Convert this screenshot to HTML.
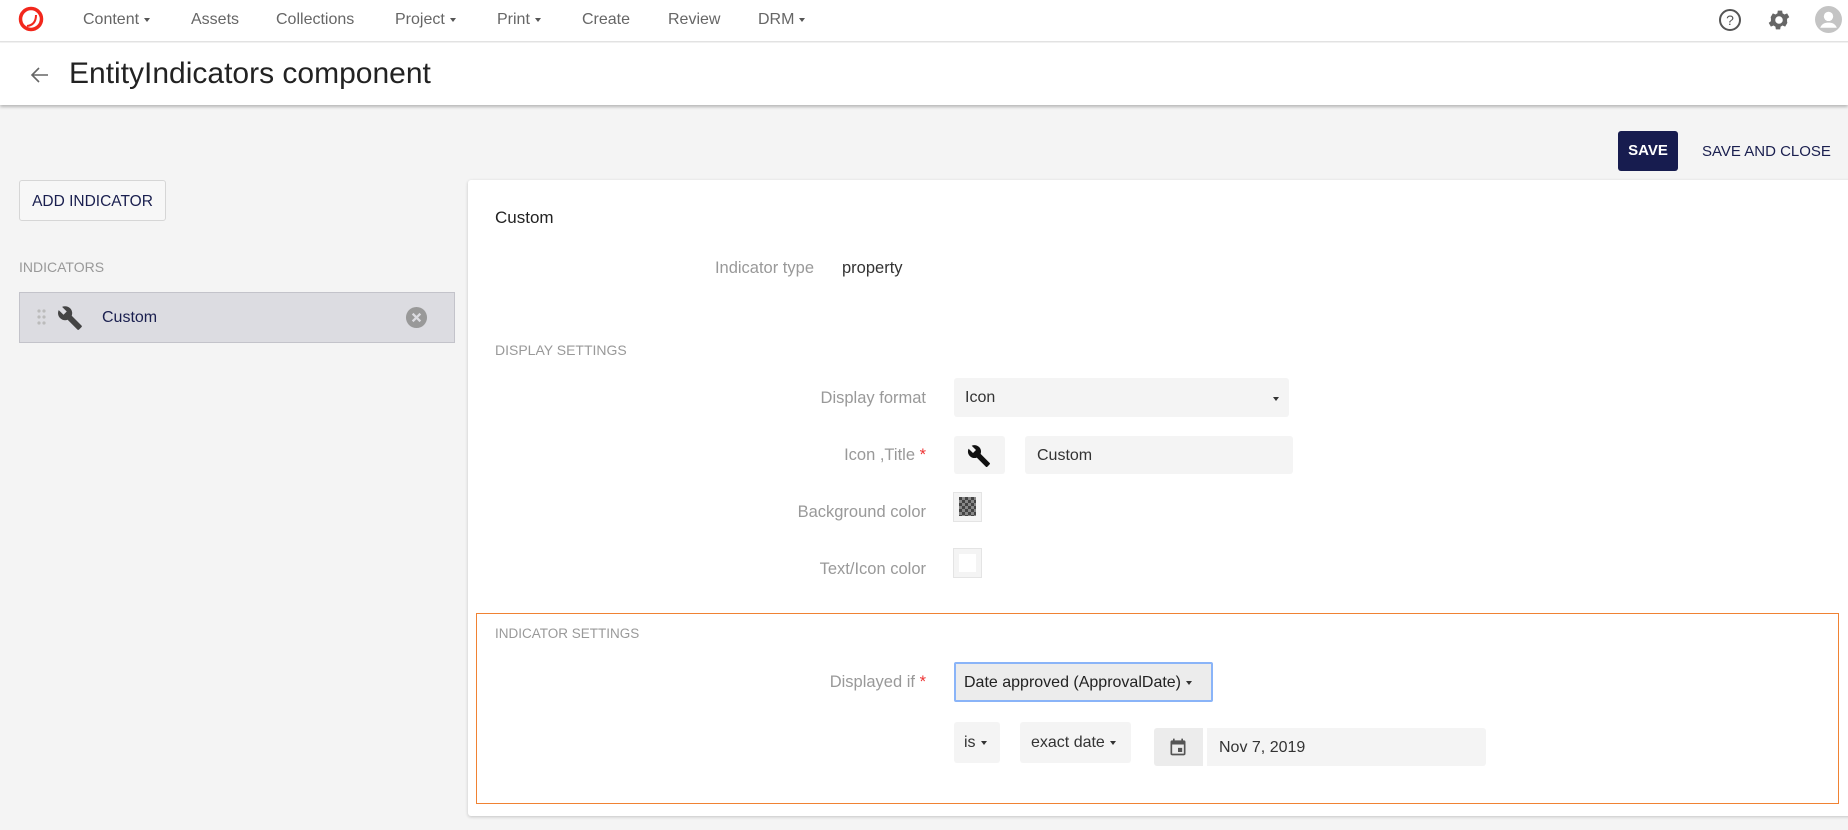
<!DOCTYPE html>
<html><head><meta charset="utf-8"><style>
*{box-sizing:border-box;margin:0;padding:0}
body{width:1848px;height:830px;background:#f4f4f4;font-family:"Liberation Sans",sans-serif;position:relative;overflow:hidden;color:#333}
.a{position:absolute}
.nav{left:0;top:0;width:1848px;height:42px;background:#fff;border-bottom:1px solid #e2e2e2}
.ni{position:absolute;top:11px;font-size:16px;color:#666}
.car{display:inline-block;width:0;height:0;border-left:3.5px solid transparent;border-right:3.5px solid transparent;border-top:4px solid #555;vertical-align:middle;margin-left:5px}
.hdr{left:0;top:43px;width:1848px;height:62px;background:#fff;box-shadow:0 2px 3px rgba(0,0,0,.25)}
.lbl{position:absolute;font-size:16.5px;color:#999;text-align:right}
.fld{position:absolute;background:#f4f4f4;border-radius:3px;font-size:16px;color:#333}
.sec{position:absolute;font-size:14px;color:#999}
.req{color:#e33}
</style></head><body>
<div class="a nav">
 <svg class="a" style="left:18px;top:6px" width="26" height="26" viewBox="0 0 26 26"><circle cx="13" cy="13" r="10.5" fill="none" stroke="#f2271c" stroke-width="3.5"/><path d="M9 20 Q18 19 18 9" fill="none" stroke="#f2271c" stroke-width="2"/></svg>
 <span class="ni" style="left:83px">Content<span class="car"></span></span>
 <span class="ni" style="left:191px">Assets</span>
 <span class="ni" style="left:276px">Collections</span>
 <span class="ni" style="left:395px">Project<span class="car"></span></span>
 <span class="ni" style="left:497px">Print<span class="car"></span></span>
 <span class="ni" style="left:582px">Create</span>
 <span class="ni" style="left:668px">Review</span>
 <span class="ni" style="left:758px">DRM<span class="car"></span></span>
 <svg class="a" style="left:1718px;top:8px" width="24" height="24" viewBox="0 0 24 24"><circle cx="12" cy="12" r="10" fill="none" stroke="#555" stroke-width="2"/><text x="12" y="17" text-anchor="middle" font-size="14" font-family="Liberation Sans" fill="#555">?</text></svg>
 <svg class="a" style="left:1766px;top:7px" width="26" height="26" viewBox="0 0 24 24"><path fill="#666" d="M19.4 13a7.5 7.5 0 0 0 0-2l2.1-1.6-2-3.5-2.5 1a7.4 7.4 0 0 0-1.7-1l-.4-2.6h-4l-.4 2.6a7.4 7.4 0 0 0-1.7 1l-2.5-1-2 3.5L4.6 11a7.5 7.5 0 0 0 0 2l-2.1 1.6 2 3.5 2.5-1a7.4 7.4 0 0 0 1.7 1l.4 2.6h4l.4-2.6a7.4 7.4 0 0 0 1.7-1l2.5 1 2-3.5zM12 15.5a3.5 3.5 0 1 1 0-7 3.5 3.5 0 0 1 0 7z"/></svg>
 <svg class="a" style="left:1815px;top:6px" width="27" height="27" viewBox="0 0 26 26"><circle cx="13" cy="13" r="13" fill="#c4c4c4"/><circle cx="13" cy="10" r="4.5" fill="#fff"/><path d="M5 21c1.5-4 4.5-5 8-5s6.5 1 8 5" fill="#fff"/></svg>
</div>
<div class="a hdr">
 <svg class="a" style="left:30px;top:22px" width="20" height="20" viewBox="0 0 20 20"><path d="M18 10H3M9 3l-7 7 7 7" fill="none" stroke="#666" stroke-width="1.6"/></svg>
 <div class="a" style="left:69px;top:14px;font-size:30px;color:#222">EntityIndicators component</div>
</div>
<div class="a" style="left:1618px;top:131px;width:60px;height:40px;background:#171c4f;border-radius:3px;color:#fff;font-weight:bold;font-size:15px;text-align:center;line-height:40px">SAVE</div>
<div class="a" style="left:1702px;top:143px;font-size:15px;color:#1a1f4f">SAVE AND CLOSE</div>

<div class="a" style="left:19px;top:180px;width:147px;height:41px;border:1px solid #d6d6d6;border-radius:3px;background:#f7f7f7;font-size:15.5px;color:#1a1f4f;text-align:center;line-height:41px">ADD INDICATOR</div>
<div class="sec" style="left:19px;top:259px">INDICATORS</div>
<div class="a" style="left:19px;top:292px;width:436px;height:51px;background:#dcdce1;border:1px solid #c3c3ca">
 <svg class="a" style="left:16px;top:15px" width="12" height="20"><g fill="#bbb"><circle cx="3" cy="3" r="1.6"/><circle cx="8" cy="3" r="1.6"/><circle cx="3" cy="9" r="1.6"/><circle cx="8" cy="9" r="1.6"/><circle cx="3" cy="15" r="1.6"/><circle cx="8" cy="15" r="1.6"/></g></svg>
 <svg class="a" style="left:37px;top:12px" width="26" height="26" viewBox="0 0 24 24"><path fill="#444" d="M22.7 19l-9.1-9.1c.9-2.3.4-5-1.5-6.9-2-2-5-2.4-7.4-1.3L9 6 6 9 1.6 4.7C.4 7.1.9 10.1 2.9 12.1c1.9 1.9 4.6 2.4 6.9 1.5l9.1 9.1c.4.4 1 .4 1.4 0l2.3-2.3c.5-.4.5-1.1.1-1.4z"/></svg>
 <div class="a" style="left:82px;top:16px;font-size:16px;color:#1a1f4f">Custom</div>
 <svg class="a" style="left:385px;top:13px" width="23" height="23" viewBox="0 0 24 24"><circle cx="12" cy="12" r="11" fill="#999"/><path d="M8 8l8 8M16 8l-8 8" stroke="#dcdce1" stroke-width="2.4"/></svg>
</div>

<div class="a" style="left:468px;top:180px;width:1390px;height:636px;background:#fff;border-radius:3px;box-shadow:0 1px 3px rgba(0,0,0,.2)"></div>
<div class="a" style="left:495px;top:208px;font-size:17px;color:#222">Custom</div>
<div class="lbl" style="left:614px;width:200px;top:259px">Indicator type</div>
<div class="a" style="left:842px;top:259px;font-size:16.5px;color:#333">property</div>
<div class="sec" style="left:495px;top:342px">DISPLAY SETTINGS</div>
<div class="lbl" style="left:626px;width:300px;top:389px">Display format</div>
<div class="fld" style="left:954px;top:378px;width:335px;height:39px;padding:11px 11px">Icon<span style="position:absolute;right:10px;top:19px;border-left:3.5px solid transparent;border-right:3.5px solid transparent;border-top:4px solid #333"></span></div>
<div class="lbl" style="left:626px;width:300px;top:446px">Icon ,Title <span class="req">*</span></div>
<div class="fld" style="left:954px;top:436px;width:51px;height:38px"><svg style="position:absolute;left:13px;top:8px" width="24" height="24" viewBox="0 0 24 24"><path fill="#111" d="M22.7 19l-9.1-9.1c.9-2.3.4-5-1.5-6.9-2-2-5-2.4-7.4-1.3L9 6 6 9 1.6 4.7C.4 7.1.9 10.1 2.9 12.1c1.9 1.9 4.6 2.4 6.9 1.5l9.1 9.1c.4.4 1 .4 1.4 0l2.3-2.3c.5-.4.5-1.1.1-1.4z"/></svg></div>
<div class="fld" style="left:1025px;top:436px;width:268px;height:38px;padding:11px 12px">Custom</div>
<div class="lbl" style="left:626px;width:300px;top:503px">Background color</div>
<div class="a" style="left:953px;top:492px;width:29px;height:30px;border:1px solid #e4e4e4;background:#f4f4f4"><svg style="position:absolute;left:5px;top:4px" width="17" height="19"><defs><pattern id="p" width="6" height="6" patternUnits="userSpaceOnUse"><rect width="6" height="6" fill="#888"/><rect width="3" height="3" fill="#444"/><rect x="3" y="3" width="3" height="3" fill="#444"/></pattern></defs><rect width="17" height="19" fill="url(#p)"/></svg></div>
<div class="lbl" style="left:626px;width:300px;top:560px">Text/Icon color</div>
<div class="a" style="left:953px;top:548px;width:29px;height:30px;border:1px solid #e4e4e4;background:#f4f4f4"><div style="position:absolute;left:5px;top:5px;width:17px;height:18px;background:#fff"></div></div>

<div class="a" style="left:476px;top:613px;width:1363px;height:191px;border:1.5px solid #f08233"></div>
<div class="sec" style="left:495px;top:626px;font-size:13.5px">INDICATOR SETTINGS</div>
<div class="lbl" style="left:626px;width:300px;top:673px">Displayed if <span class="req">*</span></div>
<div class="a" style="left:954px;top:662px;width:259px;height:40px;background:#ececec;border:2px solid #8ab4f8;border-radius:2px;font-size:16px;padding:10px 8px;color:#222">Date approved (ApprovalDate)<span class="car" style="border-top-color:#333"></span></div>
<div class="fld" style="left:954px;top:722px;width:46px;height:41px;padding:12px 10px">is<span class="car" style="border-top-color:#333"></span></div>
<div class="fld" style="left:1020px;top:722px;width:111px;height:41px;padding:12px 11px">exact date<span class="car" style="border-top-color:#333"></span></div>
<div class="a" style="left:1154px;top:728px;width:49px;height:38px;background:#ececec;border-radius:3px 0 0 3px"><svg style="position:absolute;left:14px;top:9px" width="20" height="20" viewBox="0 0 24 24"><path fill="#555" d="M19 4h-1V2h-2v2H8V2H6v2H5a2 2 0 0 0-2 2v14a2 2 0 0 0 2 2h14a2 2 0 0 0 2-2V6a2 2 0 0 0-2-2zm0 16H5V9h14zM12 13h5v5h-5z"/></svg></div>
<div class="fld" style="left:1207px;top:728px;width:279px;height:38px;padding:11px 12px;border-radius:0 3px 3px 0">Nov 7, 2019</div>
</body></html>
